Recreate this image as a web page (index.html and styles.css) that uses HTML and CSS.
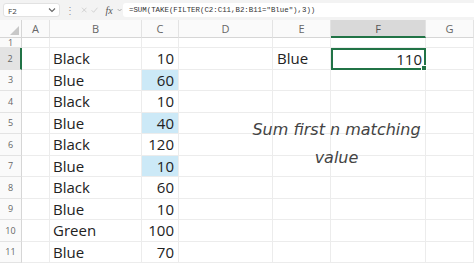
FILE: index.html
```html
<!DOCTYPE html>
<html lang="en">
<head>
  <meta charset="UTF-8" />
  <title>Sum first n matching</title>
  <link rel="stylesheet" href="styles.css">
</head>
<body>
  <div class="toolbar">
    <div class="namebox">
      <span>F2</span>
      <svg class="chev" width="8" height="6" viewBox="0 0 8 6"><path d="M1 1.5 L4 4.5 L7 1.5" fill="none" stroke="#666" stroke-width="1.1"/></svg>
    </div>
    <div class="tools">
      <span class="dots">⋮</span>
      <svg width="10" height="10" viewBox="0 0 10 10"><path d="M1.5 1.5 L8.5 8.5 M8.5 1.5 L1.5 8.5" stroke="#c4c4c4" stroke-width="1.1"/></svg>
      <svg width="11" height="10" viewBox="0 0 11 10"><path d="M1 5.5 L4 8.5 L10 1.5" fill="none" stroke="#c4c4c4" stroke-width="1.1"/></svg>
      <span class="fx">fx</span>
      <svg class="chev" width="8" height="6" viewBox="0 0 8 6"><path d="M1 1.5 L4 4.5 L7 1.5" fill="none" stroke="#888" stroke-width="1"/></svg>
    </div>
    <div class="formula">=SUM(TAKE(FILTER(C2:C11,B2:B11="Blue"),3))</div>
  </div>

  <div class="sheet">
    <div class="grid">
      <div class="hd corner"><span class="tri"></span></div>
      <div class="hd col">A</div>
      <div class="hd col">B</div>
      <div class="hd col">C</div>
      <div class="hd col">D</div>
      <div class="hd col">E</div>
      <div class="hd col active">F</div>
      <div class="hd col">G</div>

      <div class="hd row">1</div>
      <div class="c"></div><div class="c"></div><div class="c"></div><div class="c"></div><div class="c"></div><div class="c"></div><div class="c"></div>

      <div class="hd row active">2</div>
      <div class="c"></div><div class="c">Black</div><div class="c num">10</div><div class="c"></div><div class="c pad">Blue</div><div class="c num sel">110<span class="handle"></span></div><div class="c"></div>

      <div class="hd row">3</div>
      <div class="c"></div><div class="c">Blue</div><div class="c num hl">60</div><div class="c"></div><div class="c"></div><div class="c"></div><div class="c"></div>

      <div class="hd row">4</div>
      <div class="c"></div><div class="c">Black</div><div class="c num">10</div><div class="c"></div><div class="c"></div><div class="c"></div><div class="c"></div>

      <div class="hd row">5</div>
      <div class="c"></div><div class="c">Blue</div><div class="c num hl">40</div><div class="c"></div><div class="c"></div><div class="c"></div><div class="c"></div>

      <div class="hd row">6</div>
      <div class="c"></div><div class="c">Black</div><div class="c num">120</div><div class="c"></div><div class="c"></div><div class="c"></div><div class="c"></div>

      <div class="hd row">7</div>
      <div class="c"></div><div class="c">Blue</div><div class="c num hl">10</div><div class="c"></div><div class="c"></div><div class="c"></div><div class="c"></div>

      <div class="hd row">8</div>
      <div class="c"></div><div class="c">Black</div><div class="c num">60</div><div class="c"></div><div class="c"></div><div class="c"></div><div class="c"></div>

      <div class="hd row">9</div>
      <div class="c"></div><div class="c">Blue</div><div class="c num">10</div><div class="c"></div><div class="c"></div><div class="c"></div><div class="c"></div>

      <div class="hd row">10</div>
      <div class="c"></div><div class="c">Green</div><div class="c num">100</div><div class="c"></div><div class="c"></div><div class="c"></div><div class="c"></div>

      <div class="hd row">11</div>
      <div class="c"></div><div class="c">Blue</div><div class="c num">70</div><div class="c"></div><div class="c"></div><div class="c"></div><div class="c"></div>
    </div>

    <!-- text box floating over the grid -->
    <div class="note">Sum first n matching<br>value</div>
  </div>
</body>
</html>
```

FILE: styles.css
```css
body {
  margin: 0;
  width: 474px;
  height: 263px;
  overflow: hidden;
  background: #fff;
  font-family: "Open Sans", Arial, sans-serif;
}
.toolbar {
  height: 20px;
  background: #f3f3f3;
  display: flex;
  align-items: center;
  padding: 0 0 0 3px;
  box-sizing: border-box;
}
.namebox {
  width: 57px;
  height: 14px;
  background: #fff;
  border: 1px solid #e2e2e2;
  border-radius: 3px;
  box-sizing: border-box;
  display: flex;
  align-items: center;
  justify-content: space-between;
  padding: 0 3px 0 4px;
  font-size: 8px;
  color: #444;
}
.tools {
  width: 62px;
  height: 14px;
  display: flex;
  align-items: center;
  gap: 4px;
  padding-left: 5px;
  box-sizing: border-box;
}
.dots {
  color: #999;
  font-size: 10px;
  margin-right: 2px;
}
.fx {
  font-family: "Liberation Serif", serif;
  font-style: italic;
  font-size: 10px;
  color: #555;
  margin-left: 3px;
}
.formula {
  flex: 1;
  height: 14px;
  background: #fff;
  border-radius: 3px 0 0 3px;
  font-family: "Liberation Mono", monospace;
  font-size: 7.4px;
  line-height: 14px;
  color: #333;
  padding-left: 6px;
  margin-left: 1px;
}
.sheet {
  position: relative;
}
.grid {
  display: grid;
  grid-template-columns: 22px 28px 92px 37px 94px 58px 95px 48px;
  grid-template-rows: 18px 10px repeat(10, 21.5px);
}
.hd {
  background: #fafafa;
  color: #666;
  font-size: 10px;
  line-height: 1;
  display: flex;
  align-items: center;
  justify-content: center;
  box-sizing: border-box;
}
.col {
  border-right: 1px solid #e3e3e3;
  border-bottom: 1px solid #d6d6d6;
  font-size: 11px;
}
.row {
  border-right: 1px solid #d6d6d6;
  border-bottom: 1px solid #e3e3e3;
  font-size: 9px;
}
.corner {
  border-right: 1px solid #d6d6d6;
  border-bottom: 1px solid #d6d6d6;
  position: relative;
}
.tri {
  position: absolute;
  right: 2px;
  bottom: 2px;
  width: 0;
  height: 0;
  border-left: 9px solid transparent;
  border-bottom: 9px solid #c8c8c8;
}
.col.active {
  background: #d9d9d9;
  border-bottom: 2px solid #217346;
  color: #555;
}
.row.active {
  background: #e3e3e3;
  border-right: 2px solid #217346;
}
.c {
  border-right: 1px solid #ececec;
  border-bottom: 1px solid #ececec;
  box-sizing: border-box;
  font-size: 15px;
  color: #222;
  display: flex;
  align-items: center;
  padding: 0 3px;
  overflow: hidden;
}
.pad {
  padding-left: 4px;
}
.num {
  justify-content: flex-end;
  padding-right: 4px;
}
.hl {
  background: #cce9f7;
}
.sel {
  border: 2px solid #217346;
  position: relative;
  overflow: visible;
  padding-right: 2px;
}
.handle {
  position: absolute;
  right: -3px;
  bottom: -3px;
  width: 4px;
  height: 4px;
  background: #217346;
  border: 1px solid #fff;
}
.note {
  position: absolute;
  left: 249px;
  top: 96px;
  width: 175px;
  text-align: center;
  font-family: "DejaVu Sans", sans-serif;
  font-style: italic;
  font-size: 16px;
  line-height: 28px;
  color: #444;
}
```
